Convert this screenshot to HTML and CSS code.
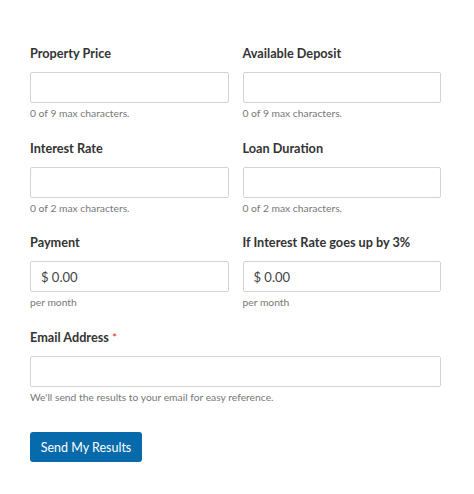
FILE: index.html
```html
<!DOCTYPE html>
<html lang="en">
<head>
    <meta charset="UTF-8">
    <meta name="viewport" content="width=device-width, initial-scale=1.0">
    <title>Mortgage Calculator</title>
    <link rel="stylesheet" href="styles.css">
</head>
<body>
    <form class="calc-form">
        <div class="row">
            <div class="field">
                <label class="field-label">Property Price</label>
                <input class="field-input" type="text">
                <div class="field-help">0 of 9 max characters.</div>
            </div>
            <div class="field">
                <label class="field-label">Available Deposit</label>
                <input class="field-input" type="text">
                <div class="field-help">0 of 9 max characters.</div>
            </div>
        </div>
        <div class="row">
            <div class="field">
                <label class="field-label">Interest Rate</label>
                <input class="field-input" type="text">
                <div class="field-help">0 of 2 max characters.</div>
            </div>
            <div class="field">
                <label class="field-label">Loan Duration</label>
                <input class="field-input" type="text">
                <div class="field-help">0 of 2 max characters.</div>
            </div>
        </div>
        <div class="row">
            <div class="field">
                <label class="field-label">Payment</label>
                <input class="field-input" type="text" value="$ 0.00">
                <div class="field-help">per month</div>
            </div>
            <div class="field">
                <label class="field-label">If Interest Rate goes up by 3%</label>
                <input class="field-input" type="text" value="$ 0.00">
                <div class="field-help">per month</div>
            </div>
        </div>
        <div class="row single">
            <div class="field">
                <label class="field-label">Email Address <span class="required">*</span></label>
                <input class="field-input" type="email">
                <div class="field-help">We'll send the results to your email for easy reference.</div>
            </div>
        </div>
        <button type="button" class="submit">Send My Results</button>
    </form>
</body>
</html>
```

FILE: styles.css
```css
body {
    margin: 0;
    background-color: #ffffff;
    font-family: Lato, "Open Sans", sans-serif;
    color: #333;
}
.calc-form {
    width: 411px;
    padding: 45px 0 0 30px;
}
.row {
    display: grid;
    grid-template-columns: 1fr 1fr;
    column-gap: 14px;
    margin-bottom: 19.5px;
}
.row.single {
    grid-template-columns: 1fr;
}
.field {
    display: flex;
    flex-direction: column;
}
.field-label {
    font-size: 12.7px;
    font-weight: bold;
    line-height: 17px;
    margin-bottom: 10px;
    color: #333;
}
.required {
    color: #d63637;
    font-weight: normal;
    font-size: 12px;
}
.field-input {
    box-sizing: border-box;
    height: 31px;
    border: 1px solid #d3d3d3;
    border-radius: 2px;
    padding: 0 10px;
    font-family: inherit;
    font-size: 13px;
    color: #444;
    background: #fff;
}
.field-help {
    font-size: 10.3px;
    line-height: 14px;
    margin-top: 3px;
    color: #777;
}
.submit {
    margin-top: 9px;
    width: 112px;
    height: 30px;
    padding: 0;
    border: none;
    border-radius: 3px;
    background-color: #066aab;
    color: #fff;
    font-family: inherit;
    font-size: 12.5px;
    cursor: pointer;
}
```
